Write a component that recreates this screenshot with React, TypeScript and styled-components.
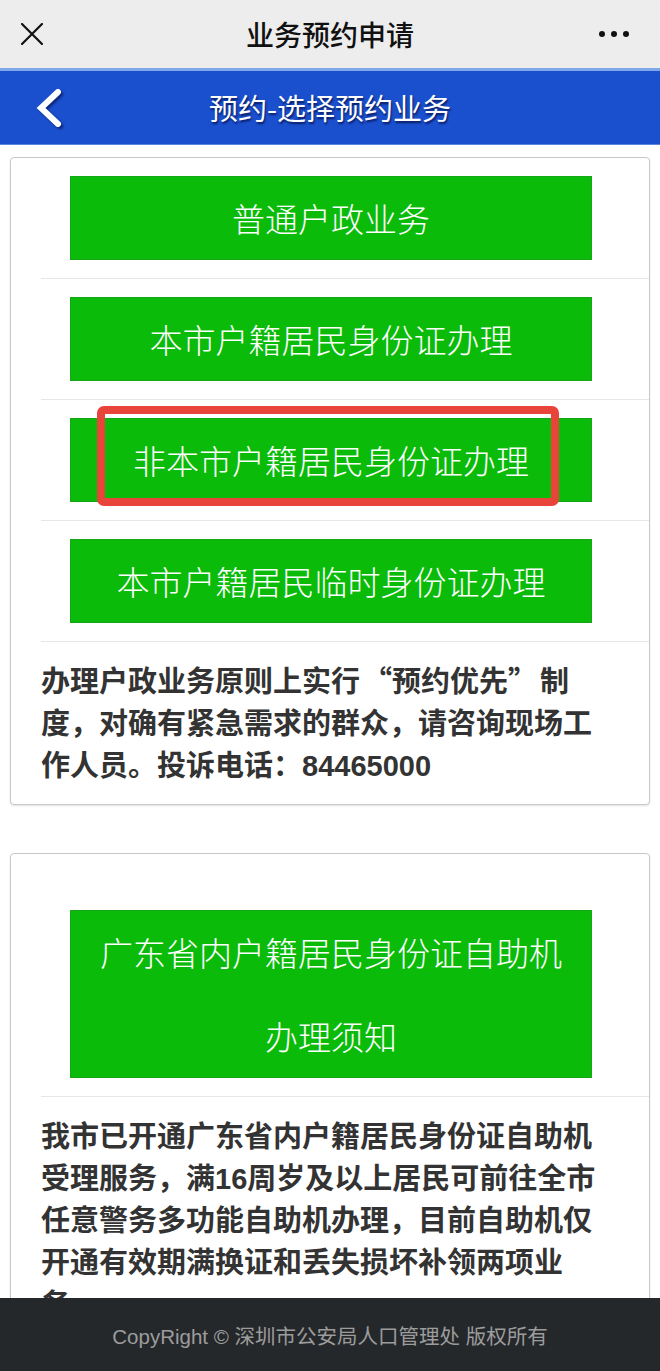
import React from "react";
import styled, { createGlobalStyle } from "styled-components";

const GlobalStyle = createGlobalStyle`
  html, body {
    margin: 0;
    padding: 0;
    background: #ffffff;
    font-family: "Noto Sans CJK SC", sans-serif;
    -webkit-font-smoothing: antialiased;
  }
  * { box-sizing: border-box; }
`;

const Page = styled.div`
  width: 660px;
  min-height: 1371px;
  background: #ffffff;
`;

const TopBar = styled.header`
  height: 68px;
  background: #ededed;
  display: grid;
  grid-template-columns: 80px 1fr 80px;
  align-items: center;
`;

const TopTitle = styled.h1`
  margin: 0;
  text-align: center;
  font-family: "Noto Sans CJK SC", sans-serif;
  font-size: 28px;
  font-weight: 500;
  color: #111111;
  line-height: 1;
`;

const IconSlot = styled.div<{ $align: "start" | "end" }>`
  display: flex;
  justify-content: ${(p) => (p.$align === "start" ? "flex-start" : "flex-end")};
  align-items: center;
  padding: ${(p) => (p.$align === "start" ? "0 0 0 21px" : "0 31px 0 0")};
`;

const Dots = styled.div`
  display: flex;
  gap: 6px;
`;

const Dot = styled.span`
  width: 6px;
  height: 6px;
  border-radius: 50%;
  background: #111111;
`;

const BlueBar = styled.nav`
  height: 77px;
  background: #1a4fce;
  border-top: 3px solid #7fa8ea;
  border-bottom: 1px solid #5a86dc;
  display: grid;
  grid-template-columns: 80px 1fr 80px;
  align-items: center;
`;

const BlueTitle = styled.h2`
  margin: 0;
  text-align: center;
  font-family: "Noto Sans CJK SC", sans-serif;
  font-size: 29px;
  font-weight: 400;
  color: #ffffff;
  line-height: 1;
  text-shadow: 1px 2px 2px rgba(0, 0, 40, 0.65);
`;

const BackSlot = styled.div`
  display: flex;
  align-items: center;
  padding-left: 34px;
  filter: drop-shadow(2px 2px 1px rgba(0, 0, 40, 0.5));
`;

const Main = styled.main`
  padding: 12px 10px 120px;
  display: flex;
  flex-direction: column;
  gap: 48px;
`;

const Card = styled.section`
  border: 1px solid #c9c9c9;
  border-radius: 4px;
  background: #ffffff;
  box-shadow: 0 1px 2px rgba(0, 0, 0, 0.12);
`;

const Row = styled.div<{ $top?: number; $bottom?: number }>`
  margin-left: 30px;
  padding: ${(p) => p.$top ?? 18}px 0 ${(p) => p.$bottom ?? 18}px 0;
  border-bottom: 1px solid #e6e6e6;
  &:last-child {
    border-bottom: none;
  }
`;

const GreenButton = styled.div<{ $lines?: number }>`
  position: relative;
  width: 522px;
  margin-left: 29px;
  background: #0abb0a;
  border: 1px solid #16a616;
  color: #ffffff;
  display: flex;
  align-items: center;
  justify-content: center;
  text-align: center;
  padding: 0 14px;
  font-family: "Noto Sans CJK SC", sans-serif;
  font-weight: 300;
  font-size: 33px;
  line-height: 84px;
  height: ${(p) => 84 * (p.$lines ?? 1)}px;
`;

const Highlight = styled.span`
  position: absolute;
  left: 26px;
  right: 32px;
  top: -13px;
  bottom: -5px;
  border: 8px solid #e8443a;
  border-radius: 7px;
  pointer-events: none;
`;

const Notice = styled.p`
  margin: 0;
  width: 556px;
  font-family: "Noto Sans CJK SC", sans-serif;
  font-weight: 700;
  font-size: 29px;
  line-height: 42px;
  color: #333333;
`;

const Quoted = styled.span`
  padding: 0 3px;
  line-height: 1;
`;

const Num = styled.span`
  font-family: "Liberation Sans", sans-serif;
  font-weight: 700;
  line-height: 1;
`;

const Footer = styled.footer`
  position: fixed;
  left: 0;
  right: 0;
  bottom: 0;
  height: 73px;
  background: #25282b;
  display: flex;
  align-items: center;
  justify-content: center;
  font-family: "Liberation Sans", "Noto Sans CJK SC", sans-serif;
  font-size: 20.5px;
  color: #9c9c9c;
`;

const CloseIcon = () => (
  <svg width="22" height="22" viewBox="0 0 22 22">
    <path d="M1 1 L21 21 M21 1 L1 21" stroke="#111" strokeWidth="2.2" strokeLinecap="round" fill="none" />
  </svg>
);

const BackIcon = () => (
  <svg width="28" height="38" viewBox="0 0 28 38">
    <polyline points="24,3 7,19 24,35" stroke="#ffffff" strokeWidth="6" fill="none" strokeLinejoin="miter" strokeLinecap="round" />
  </svg>
);

const rows = [
  { label: "普通户政业务" },
  { label: "本市户籍居民身份证办理" },
  { label: "非本市户籍居民身份证办理", marked: true },
  { label: "本市户籍居民临时身份证办理" },
];

export default function App() {
  return (
    <Page>
      <GlobalStyle />
      <TopBar>
        <IconSlot $align="start">
          <CloseIcon />
        </IconSlot>
        <TopTitle>业务预约申请</TopTitle>
        <IconSlot $align="end">
          <Dots>
            <Dot />
            <Dot />
            <Dot />
          </Dots>
        </IconSlot>
      </TopBar>
      <BlueBar>
        <BackSlot>
          <BackIcon />
        </BackSlot>
        <BlueTitle>预约-选择预约业务</BlueTitle>
        <div />
      </BlueBar>
      <Main>
        <Card>
          {rows.map((r) => (
            <Row key={r.label}>
              <GreenButton>
                {r.label}
                {r.marked && <Highlight />}
              </GreenButton>
            </Row>
          ))}
          <Row $top={16} $bottom={20}>
            <Notice>
              办理户政业务原则上实行<Quoted>“预约优先”</Quoted>制度，对确有紧急需求的群众，请咨询现场工作人员。投诉电话：<Num>84465000</Num>
            </Notice>
          </Row>
        </Card>
        <Card>
          <Row $top={56}>
            <GreenButton $lines={2}>广东省内户籍居民身份证自助机办理须知</GreenButton>
          </Row>
          <Row $top={16} $bottom={20}>
            <Notice>
              我市已开通广东省内户籍居民身份证自助机受理服务，满<Num>16</Num>周岁及以上居民可前往全市任意警务多功能自助机办理，目前自助机仅开通有效期满换证和丢失损坏补领两项业务。
            </Notice>
          </Row>
        </Card>
      </Main>
      <Footer>CopyRight © 深圳市公安局人口管理处 版权所有</Footer>
    </Page>
  );
}
